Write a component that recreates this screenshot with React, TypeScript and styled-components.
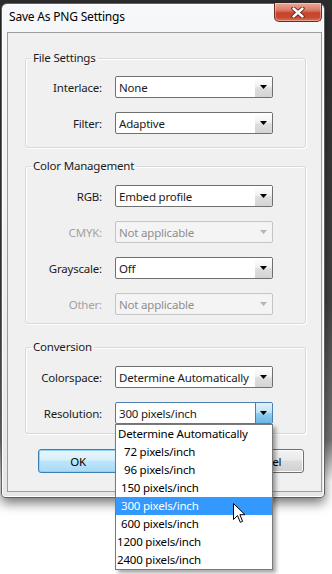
import { Fragment } from "react";
import { createGlobalStyle, styled, css } from "styled-components";

const GlobalStyle = createGlobalStyle`
  html, body {
    margin: 0;
    padding: 0;
  }
  body {
    width: 332px;
    height: 574px;
    overflow: hidden;
    background: linear-gradient(to bottom, #2e2e2e 0px, #454545 300px, #7a7a7a 440px, #ffffff 482px);
    font-family: "Noto Sans", "Liberation Sans", sans-serif;
    font-size: 11.5px;
    letter-spacing: -0.2px;
    color: #1b1b1b;
  }
`;

const Window = styled.div`
  margin: 3px 0 0 1px;
  width: 324px;
  box-sizing: border-box;
  border: 1px solid #5c5f63;
  border-radius: 6px 6px 4px 4px;
  background: linear-gradient(to bottom, #f7f8f9 0%, #eceef0 60%, #e4e6e8 100%);
  padding: 0 2px 5px 5px;
  box-shadow: 0 5px 12px rgba(0, 0, 0, 0.55), inset 0 0 0 1px #ffffff;
  display: flex;
  flex-direction: column;
`;

const TitleBar = styled.div`
  height: 28px;
  display: flex;
  justify-content: space-between;
  align-items: flex-start;
`;

const Title = styled.span`
  padding: 4px 0 0 2px;
  font-size: 12px;
  color: #000;
`;

const CloseButton = styled.div`
  width: 46px;
  height: 18px;
  margin-top: -1px;
  border: 1px solid #6e2b20;
  border-top: none;
  border-radius: 0 0 5px 5px;
  background: linear-gradient(to bottom, #e9a99b 0%, #dc7a66 40%, #c8442c 55%, #c64a30 80%, #d9745e 100%);
  box-shadow: inset 0 0 0 1px rgba(255, 255, 255, 0.35);
  display: flex;
  align-items: center;
  justify-content: center;
`;

const Panel = styled.div`
  border: 1px solid #9a9ea3;
  background: #f0f0f0;
  padding: 17px 15px 18px 17px;
  display: flex;
  flex-direction: column;
`;

const GroupBox = styled.fieldset<{ $top: number; $padTop: number; $padBottom: number }>`
  margin: ${(p) => p.$top}px 0 0 0;
  padding: ${(p) => p.$padTop}px 0 ${(p) => p.$padBottom}px 0;
  border: 1px solid #d5dadf;
  border-radius: 3px;
  box-shadow: inset 1px 1px 0 #ffffff, 1px 1px 0 #ffffff;
  min-width: 0;
`;

const Legend = styled.legend`
  margin-left: 5px;
  padding: 0 2px;
  line-height: 16px;
  color: #1b1b1b;
`;

const FieldGrid = styled.div`
  display: grid;
  grid-template-columns: 76px 158px;
  column-gap: 13px;
  row-gap: 14px;
  align-items: center;
`;

const Label = styled.label<{ $disabled?: boolean }>`
  text-align: right;
  color: ${(p) => (p.$disabled ? "#a3a3a3" : "#1b1b1b")};
`;

const Select = styled.div<{ $disabled?: boolean; $open?: boolean }>`
  position: relative;
  height: 22px;
  box-sizing: border-box;
  border: 1px solid #707070;
  border-radius: 2px;
  background: #ffffff;
  display: flex;
  align-items: center;
  ${(p) =>
    p.$disabled &&
    css`
      border-color: #c2c4c6;
      background: #f4f4f4;
      color: #8e8e8e;
    `}
  ${(p) =>
    p.$open &&
    css`
      border-color: #4b7fae;
    `}
`;

const SelectText = styled.span`
  flex: 1;
  padding-left: 3px;
  white-space: nowrap;
  overflow: hidden;
`;

const ArrowBox = styled.div<{ $disabled?: boolean; $open?: boolean }>`
  width: 17px;
  height: 100%;
  display: flex;
  align-items: center;
  justify-content: center;
  background: linear-gradient(to bottom, #ffffff 0%, #f2f2f2 45%, #dedede 55%, #d4d4d4 100%);
  border-radius: 0 1px 1px 0;
  ${(p) =>
    p.$disabled &&
    css`
      background: transparent;
    `}
  ${(p) =>
    p.$open &&
    css`
      background: linear-gradient(to bottom, #e3f2fb 0%, #c1e2f7 45%, #8fcaee 55%, #6db7e6 100%);
      box-shadow: inset 1px 0 0 #4b7fae;
    `}
`;

const DropList = styled.div`
  position: absolute;
  top: 21px;
  left: -1px;
  width: 158px;
  box-sizing: border-box;
  border: 1px solid #7a7a7a;
  background: #ffffff;
  color: #000;
  box-shadow: 3px 3px 4px rgba(0, 0, 0, 0.35);
  z-index: 5;
`;

const DropItem = styled.div<{ $indent: number; $selected?: boolean }>`
  position: relative;
  height: 18px;
  line-height: 18px;
  padding-left: ${(p) => p.$indent}px;
  white-space: nowrap;
  ${(p) =>
    p.$selected &&
    css`
      background: #3399ff;
      color: #ffffff;
    `}
`;

const Cursor = styled.svg`
  position: absolute;
  left: 117px;
  top: 6px;
  z-index: 6;
`;

const ButtonRow = styled.div`
  margin-top: 15px;
  padding: 0 0 0 13px;
  display: flex;
  justify-content: space-between;
  margin-right: 2px;
`;

const Button = styled.button<{ $default?: boolean }>`
  width: 80px;
  height: 24px;
  font-family: inherit;
  font-size: 11.5px;
  letter-spacing: -0.2px;
  color: #000;
  border: 1px solid #707070;
  border-radius: 3px;
  background: linear-gradient(to bottom, #f2f2f2 0%, #ebebeb 45%, #dddddd 50%, #cfcfcf 100%);
  box-shadow: inset 0 0 0 1px #fcfcfc;
  ${(p) =>
    p.$default &&
    css`
      border-color: #3c7fb1;
      background: linear-gradient(to bottom, #eaf6fd 0%, #d9f0fc 45%, #bee6fd 50%, #a7d9f5 100%);
      box-shadow: inset 0 0 0 1px #8bd4f5;
    `}
`;

const Arrow = ({ color = "#000" }: { color?: string }) => (
  <svg width="7" height="4" viewBox="0 0 7 4">
    <path d="M0 0 H7 L3.5 4 Z" fill={color} />
  </svg>
);

interface Field {
  label: string;
  value: string;
  disabled?: boolean;
  open?: boolean;
}

const resolutions = [
  { text: "Determine Automatically", indent: 2 },
  { text: "72 pixels/inch", indent: 8 },
  { text: "96 pixels/inch", indent: 8 },
  { text: "150 pixels/inch", indent: 5 },
  { text: "300 pixels/inch", indent: 5, selected: true },
  { text: "600 pixels/inch", indent: 5 },
  { text: "1200 pixels/inch", indent: 1 },
  { text: "2400 pixels/inch", indent: 1 },
];

const Combo = ({ value, disabled, open }: Field) => (
  <Select $disabled={disabled} $open={open}>
    <SelectText>{value}</SelectText>
    <ArrowBox $disabled={disabled} $open={open}>
      <Arrow color={disabled ? "#b4b4b4" : "#000"} />
    </ArrowBox>
    {open && (
      <DropList>
        {resolutions.map((r) => (
          <DropItem key={r.text} $indent={r.indent} $selected={r.selected}>
            {r.text}
            {r.selected && (
              <Cursor width="13" height="21" viewBox="0 0 13 21">
                <path
                  d="M0.5 0.5 L0.5 16.5 L4.5 12.5 L7.3 19.3 L9.6 18.3 L6.9 11.7 L12 11.7 Z"
                  fill="#ffffff"
                  stroke="#000000"
                  strokeWidth="1"
                  strokeLinejoin="round"
                />
              </Cursor>
            )}
          </DropItem>
        ))}
      </DropList>
    )}
  </Select>
);

const Group = ({
  title,
  fields,
  top,
  padTop,
  padBottom,
}: {
  title: string;
  fields: Field[];
  top: number;
  padTop: number;
  padBottom: number;
}) => (
  <GroupBox $top={top} $padTop={padTop} $padBottom={padBottom}>
    <Legend>{title}</Legend>
    <FieldGrid>
      {fields.map((f) => (
        <Fragment key={f.label}>
          <Label $disabled={f.disabled}>{f.label}</Label>
          <Combo {...f} />
        </Fragment>
      ))}
    </FieldGrid>
  </GroupBox>
);

const App = () => {
  return (
    <>
      <GlobalStyle />
      <Window>
        <TitleBar>
          <Title>Save As PNG Settings</Title>
          <CloseButton>
            <svg width="14" height="11" viewBox="0 0 14 11">
              <path
                d="M2.5 1.5 L11.5 9.5 M11.5 1.5 L2.5 9.5"
                stroke="#5a1e14"
                strokeWidth="4.2"
                strokeLinecap="round"
              />
              <path
                d="M2.5 1.5 L11.5 9.5 M11.5 1.5 L2.5 9.5"
                stroke="#ffffff"
                strokeWidth="2.4"
                strokeLinecap="round"
              />
            </svg>
          </CloseButton>
        </TitleBar>
        <Panel>
          <Group
            title="File Settings"
            top={0}
            padTop={10}
            padBottom={13}
            fields={[
              { label: "Interlace:", value: "None" },
              { label: "Filter:", value: "Adaptive" },
            ]}
          />
          <Group
            title="Color Management"
            top={10}
            padTop={11}
            padBottom={8}
            fields={[
              { label: "RGB:", value: "Embed profile" },
              { label: "CMYK:", value: "Not applicable", disabled: true },
              { label: "Grayscale:", value: "Off" },
              { label: "Other:", value: "Not applicable", disabled: true },
            ]}
          />
          <Group
            title="Conversion"
            top={15}
            padTop={11}
            padBottom={9}
            fields={[
              { label: "Colorspace:", value: "Determine Automatically" },
              { label: "Resolution:", value: "300 pixels/inch", open: true },
            ]}
          />
          <ButtonRow>
            <Button $default>OK</Button>
            <Button>Cancel</Button>
          </ButtonRow>
        </Panel>
      </Window>
    </>
  );
};

export default App;
